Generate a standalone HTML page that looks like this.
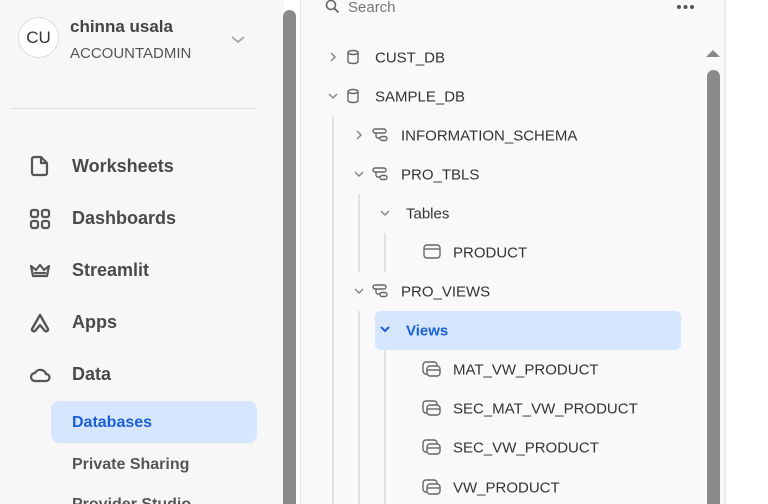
<!DOCTYPE html>
<html style="width:768px;height:504px;overflow:hidden"><head><meta charset="utf-8"><style>
*{margin:0;padding:0;box-sizing:border-box}
body{width:768px;height:504px;overflow:hidden;background:#fff;font-family:"Liberation Sans",sans-serif;position:relative}
.side{position:absolute;left:0;top:0;width:284px;height:504px;background:#f7f7f7}
.abs{position:absolute}
.sb{position:absolute;left:283px;top:10px;width:13px;height:494px;background:#8a8a8a;border-radius:7px 7px 0 0}
.panel{position:absolute;left:300px;top:-2px;width:426px;height:506px;background:#f9f9f9;border-left:1px solid #e6e6e6;border-right:2px solid #ececec}
.nav{position:absolute;left:72px;font-size:18px;font-weight:bold;color:#4a4a4a}
.ni{position:absolute;left:29px}
.t{position:absolute;font-size:15px;color:#333;white-space:nowrap;transform:translateY(-50%);margin-top:1px}
.vl{position:absolute;width:2px;background:#e2e2e2}
</style></head><body>
<div class="side">
 <div class="abs" style="left:18px;top:17px;width:41px;height:41px;border-radius:50%;border:1px solid #ddd;background:#fff;font-size:17px;color:#333;text-align:center;line-height:39px">CU</div>
 <div class="abs" style="left:70px;top:17px;font-size:17px;font-weight:bold;color:#444">chinna usala</div>
 <div class="abs" style="left:70px;top:45px;font-size:15px;color:#555">ACCOUNTADMIN</div>
 <svg class="abs" style="left:230px;top:34px" width="16" height="12"><path d="M2 3l6 5 6-5" fill="none" stroke="#aaa" stroke-width="2"/></svg>
 <div class="abs" style="left:10px;top:108px;width:247px;height:1px;background:#e2e2e2"></div>
 <svg class="ni" style="top:155px" width="22" height="22"><path d="M3 4a2 2 0 0 1 2-2h7l6 6v10a2 2 0 0 1-2 2H5a2 2 0 0 1-2-2z M12 2v6h6" fill="none" stroke="#555" stroke-width="2.2" stroke-linejoin="round"/></svg>
 <div class="nav" style="top:156px">Worksheets</div>
 <svg class="ni" style="top:208px" width="22" height="22" fill="none" stroke="#555" stroke-width="2.2"><rect x="2" y="2" width="7" height="7" rx="2"/><rect x="13" y="2" width="7" height="7" rx="2"/><rect x="2" y="13" width="7" height="7" rx="2"/><rect x="13" y="13" width="7" height="7" rx="2"/></svg>
 <div class="nav" style="top:208px">Dashboards</div>
 <svg class="ni" style="top:260px" width="22" height="22" fill="none" stroke="#555" stroke-width="2.2" stroke-linejoin="round"><path d="M2 6l5 4 4-5 4 5 5-4-2 10H4z"/><path d="M5 13h12"/></svg>
 <div class="nav" style="top:260px">Streamlit</div>
 <svg class="ni" style="top:312px" width="22" height="22" fill="none" stroke="#555" stroke-width="2.4" stroke-linejoin="round"><path d="M11 3L3 17a2 2 0 0 0 3 2l5-6 5 6a2 2 0 0 0 3-2z"/></svg>
 <div class="nav" style="top:312px">Apps</div>
 <svg class="ni" style="top:364px" width="22" height="22" fill="none" stroke="#555" stroke-width="2.2"><path d="M6 17a4 4 0 0 1 0-8 6 6 0 0 1 11 1 3.5 3.5 0 0 1 0 7z"/></svg>
 <div class="nav" style="top:364px">Data</div>
 <div class="abs" style="left:51px;top:401px;width:206px;height:42px;background:#d6e6fc;border-radius:8px"></div>
 <div class="abs" style="left:72px;top:414px;font-size:16px;font-weight:bold;color:#1a5fd6">Databases</div>
 <div class="abs" style="left:72px;top:456px;font-size:16px;font-weight:bold;color:#555">Private Sharing</div>
 <div class="abs" style="left:72px;top:496px;font-size:16px;font-weight:bold;color:#555">Provider Studio</div>
</div>
<div class="sb"></div>
<div class="panel"></div>
<svg class="abs" style="left:325px;top:0px" width="16" height="14"><circle cx="6" cy="5" r="4.5" fill="none" stroke="#666" stroke-width="1.6"/><path d="M9.5 8.5l4 4" stroke="#666" stroke-width="1.8"/></svg>
<div class="abs" style="left:348px;top:-1px;font-size:15px;color:#777">Search</div>
<svg class="abs" style="left:676px;top:4px" width="20" height="6" fill="#555"><circle cx="3" cy="3" r="2"/><circle cx="9.5" cy="3" r="2"/><circle cx="16" cy="3" r="2"/></svg>
<svg class="abs" style="left:705px;top:48px" width="16" height="10"><path d="M1 9l7-7 7 7z" fill="#888"/></svg>
<div class="abs" style="left:707px;top:70px;width:13px;height:434px;background:#8a8a8a;border-radius:7px 7px 0 0"></div>

<div class="vl" style="left:332px;top:116px;height:388px"></div>
<div class="vl" style="left:358px;top:194px;height:78px"></div>
<div class="vl" style="left:384px;top:233px;height:39px"></div>
<div class="vl" style="left:358px;top:311px;height:193px"></div>
<div class="vl" style="left:384px;top:350px;height:154px"></div>

<div class="abs" style="left:375px;top:311px;width:306px;height:39px;background:#d6e6fc;border-radius:6px"></div>

<svg width="0" height="0" style="position:absolute"><defs>
<g id="r"><path d="M2 1l4 4-4 4" fill="none" stroke="#888" stroke-width="1.5"/></g>
<g id="d"><path d="M1 2l4 4 4-4" fill="none" stroke="#888" stroke-width="1.5"/></g>
<g id="db" fill="none" stroke="#666" stroke-width="1.4"><ellipse cx="7" cy="3.5" rx="5" ry="2"/><path d="M2 3.5v9c0 1.2 2.2 2 5 2s5-.8 5-2v-9"/></g>
<g id="sc" fill="none" stroke="#666" stroke-width="1.4"><rect x="1" y="1" width="13" height="4" rx="2"/><path d="M4 5v3a2 2 0 0 0 2 2h2"/><rect x="8" y="8.5" width="7" height="4" rx="2"/></g>
<g id="tb" fill="none" stroke="#666" stroke-width="1.4"><rect x="1" y="1" width="16" height="13" rx="3"/><path d="M1 5h16"/></g>
<g id="vw" fill="none" stroke="#666" stroke-width="1.4"><path d="M5 13H4a3 3 0 0 1-3-3V4a3 3 0 0 1 3-3h8a3 3 0 0 1 3 3v1"/><rect x="5" y="5" width="13" height="10" rx="3"/><path d="M5 9h13"/></g>
</defs></svg>

<svg class="abs" style="left:329px;top:52px" width="10" height="10"><use href="#r"/></svg>
<svg class="abs" style="left:346px;top:49px" width="15" height="16"><use href="#db"/></svg>
<div class="t" style="left:375px;top:57px">CUST_DB</div>

<svg class="abs" style="left:328px;top:92px" width="10" height="10"><use href="#d"/></svg>
<svg class="abs" style="left:346px;top:88px" width="15" height="16"><use href="#db"/></svg>
<div class="t" style="left:375px;top:96px">SAMPLE_DB</div>

<svg class="abs" style="left:355px;top:130px" width="10" height="10"><use href="#r"/></svg>
<svg class="abs" style="left:372px;top:128px" width="16" height="14"><use href="#sc"/></svg>
<div class="t" style="left:401px;top:135px">INFORMATION_SCHEMA</div>

<svg class="abs" style="left:354px;top:170px" width="10" height="10"><use href="#d"/></svg>
<svg class="abs" style="left:372px;top:167px" width="16" height="14"><use href="#sc"/></svg>
<div class="t" style="left:401px;top:174px">PRO_TBLS</div>

<svg class="abs" style="left:380px;top:209px" width="10" height="10"><use href="#d"/></svg>
<div class="t" style="left:406px;top:213px">Tables</div>

<svg class="abs" style="left:423px;top:244px" width="18" height="16"><use href="#tb"/></svg>
<div class="t" style="left:453px;top:252px">PRODUCT</div>

<svg class="abs" style="left:354px;top:287px" width="10" height="10"><use href="#d"/></svg>
<svg class="abs" style="left:372px;top:284px" width="16" height="14"><use href="#sc"/></svg>
<div class="t" style="left:401px;top:291px">PRO_VIEWS</div>

<svg class="abs" style="left:380px;top:325px" width="10" height="10"><path d="M1 2l4 4 4-4" fill="none" stroke="#1a5fd6" stroke-width="2"/></svg>
<div class="t" style="left:406px;top:330px;color:#1a5fd6;font-weight:bold">Views</div>

<svg class="abs" style="left:422px;top:361px" width="19" height="16"><use href="#vw"/></svg>
<div class="t" style="left:453px;top:369px">MAT_VW_PRODUCT</div>
<svg class="abs" style="left:422px;top:400px" width="19" height="16"><use href="#vw"/></svg>
<div class="t" style="left:453px;top:408px">SEC_MAT_VW_PRODUCT</div>
<svg class="abs" style="left:422px;top:439px" width="19" height="16"><use href="#vw"/></svg>
<div class="t" style="left:453px;top:447px">SEC_VW_PRODUCT</div>
<svg class="abs" style="left:422px;top:479px" width="19" height="16"><use href="#vw"/></svg>
<div class="t" style="left:453px;top:487px">VW_PRODUCT</div>
</body></html>
